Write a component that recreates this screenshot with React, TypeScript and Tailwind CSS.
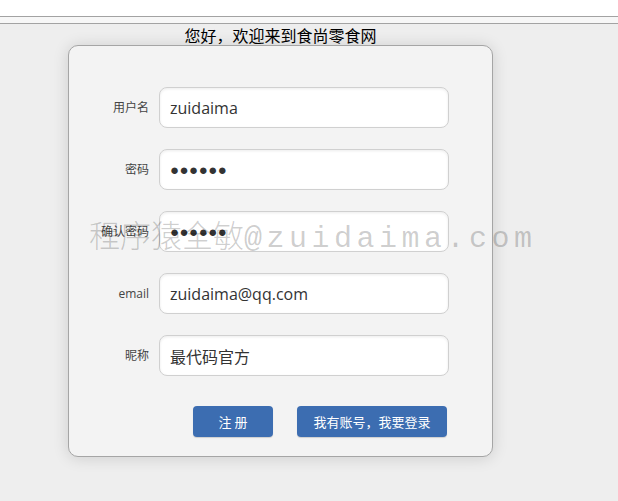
import React from 'react';

const rows = [
  { label: '用户名', value: 'zuidaima', pwd: false },
  { label: '密码', value: '●●●●●●', pwd: true },
  { label: '确认密码', value: '●●●●●●', pwd: true },
  { label: 'email', value: 'zuidaima@qq.com', pwd: false },
  { label: '昵称', value: '最代码官方', pwd: false },
];

export default function App() {
  return (
    <div className="relative min-h-screen bg-[#eeeeee] font-['Open_Sans','Noto_Sans_CJK_SC',sans-serif]">
      {/* top bars */}
      <div className="h-[17px] bg-white border-b border-[#a3a3a3]" />
      <div className="h-[7px] bg-[#f7f7f7] border-b border-[#a3a3a3]" />

      <div className="ml-[68px] w-[425px]">
        <h1 className="pt-[1px] h-[21px] text-center text-[16px] leading-[20px] text-black font-['Noto_Sans_CJK_SC',sans-serif]">
          您好，欢迎来到食尚零食网
        </h1>

        {/* card */}
        <div className="h-[412px] rounded-[10px] border border-[#a5a5a5] bg-[#f3f3f3] shadow-[0_1px_16px_rgba(0,0,0,0.14)] pt-[41px]">
          <div className="flex flex-col gap-[21px]">
            {rows.map((r) => (
              <div key={r.label} className="flex items-center">
                <label className="w-[80px] text-right text-[12px] text-[#444] font-['Open_Sans','Noto_Sans_CJK_SC',sans-serif]">
                  {r.label}
                </label>
                <input
                  readOnly
                  type="text"
                  defaultValue={r.value}
                  className={
                    r.pwd
                      ? "ml-[10px] w-[290px] h-[41px] rounded-[8px] border border-[#d0d0d0] bg-white pl-[10px] text-[15px] tracking-[0.5px] text-[#333] shadow-[inset_0_1px_3px_rgba(0,0,0,0.08)] outline-none font-['Liberation_Sans',sans-serif]"
                      : "ml-[10px] w-[290px] h-[41px] rounded-[8px] border border-[#d0d0d0] bg-white pl-[10px] text-[16px] text-[#333] shadow-[inset_0_1px_3px_rgba(0,0,0,0.08)] outline-none font-['Open_Sans','Noto_Sans_CJK_SC',sans-serif]"
                  }
                />
              </div>
            ))}
          </div>

          <div className="flex gap-[24px] pl-[124px] mt-[30px]">
            <button className="w-[80px] h-[31px] rounded-[4px] bg-[#3c6db1] text-white text-[13px] font-['Noto_Sans_CJK_SC',sans-serif] shadow-[0_1px_1px_rgba(0,0,0,0.15)]">
              注 册
            </button>
            <button className="w-[150px] h-[31px] rounded-[4px] bg-[#3c6db1] text-white text-[13px] font-['Noto_Sans_CJK_SC',sans-serif] shadow-[0_1px_1px_rgba(0,0,0,0.15)]">
              我有账号，我要登录
            </button>
          </div>
        </div>
      </div>

      {/* watermark */}
      <div className="pointer-events-none absolute left-[89px] top-[214px] whitespace-nowrap text-black/20 leading-[40px]">
        <span className="text-[31px] font-['Noto_Sans_CJK_SC',serif] font-light">程序猿全敏</span>
        <span className="text-[30px] tracking-[4.5px] font-['Liberation_Mono',monospace]">@zuidaima.com</span>
      </div>
    </div>
  );
}
